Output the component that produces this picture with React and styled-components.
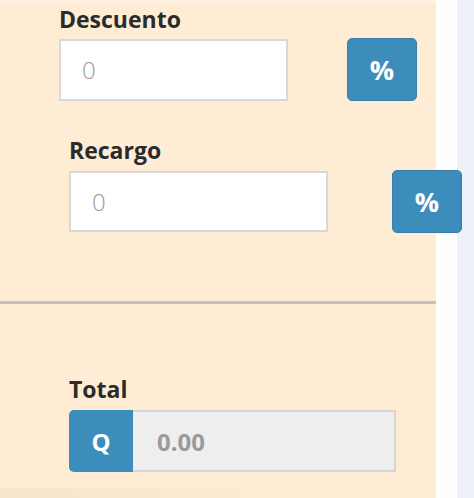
import React from 'react'
import styled, { createGlobalStyle } from 'styled-components'

const Global = createGlobalStyle`
    html, body {
        margin: 0;
        padding: 0;
        background: #eef1f7;
        font-family: 'Open Sans', 'Liberation Sans', sans-serif;
    }
`

const Page = styled.div`
    display: flex;
    height: 498px;
    overflow: hidden;
`
const Panel = styled.div`
    width: 436px;
    flex-shrink: 0;
    background: #feecd5;
    border-top: 3px solid #fff2e3;
    box-sizing: border-box;
    display: flex;
    flex-direction: column;
    position: relative;
    z-index: 1;
`
const Gutter = styled.div`
    width: 21px;
    flex-shrink: 0;
    background: #fefefe;
`
const Section = styled.div`
    padding-left: ${props => props.indent}px;
    margin-top: ${props => props.top}px;
`
const Label = styled.div`
    font-size: 23px;
    line-height: 30px;
    font-weight: 700;
    color: #2b2b2b;
    margin-bottom: ${props => props.gap}px;
`
const Row = styled.div`
    display: flex;
    align-items: center;
    gap: ${props => props.gap}px;
`
const Input = styled.div`
    width: ${props => props.width}px;
    height: ${props => props.height}px;
    flex-shrink: 0;
    box-sizing: border-box;
    background: #fff;
    border: 2px solid #d8d8d8;
    padding-left: 21px;
    display: flex;
    align-items: center;
    font-size: 24px;
    font-weight: 300;
    color: #9a9a9a;
`
const PctButton = styled.button`
    width: 70px;
    height: 63px;
    flex-shrink: 0;
    background: #3c8dbc;
    border: 1px solid #367fa9;
    border-radius: 5px;
    color: #fff;
    font-family: inherit;
    font-size: 27px;
    font-weight: 700;
    padding: 0;
`
const Divider = styled.div`
    height: 3px;
    background: #c6c0b8;
    margin-top: ${props => props.top}px;
`
const Group = styled.div`
    display: flex;
    height: 62px;
`
const Addon = styled.div`
    width: 64px;
    background: #3c8dbc;
    border-radius: 5px 0 0 5px;
    color: #fff;
    font-size: 24px;
    font-weight: 700;
    display: flex;
    align-items: center;
    justify-content: center;
`
const ReadOnly = styled.div`
    width: 263px;
    box-sizing: border-box;
    background: #eeeeee;
    border: 2px solid #d6d6d6;
    border-left: none;
    padding-left: 24px;
    display: flex;
    align-items: center;
    font-size: 24px;
    font-weight: 700;
    color: #9a9a9a;
`
const Shade = styled.div`
    position: absolute;
    left: 0;
    bottom: 0;
    width: 300px;
    height: 10px;
    background: linear-gradient(90deg, rgba(190,160,120,0.1), rgba(190,160,120,0));
`

const App = () => {
    return (
        <Page>
            <Global />
            <Panel>
                <Section indent={59} top={1}>
                    <Label gap={4}>Descuento</Label>
                    <Row gap={59}>
                        <Input width={229} height={62}>0</Input>
                        <PctButton>%</PctButton>
                    </Row>
                </Section>
                <Section indent={69} top={34}>
                    <Label gap={5}>Recargo</Label>
                    <Row gap={64}>
                        <Input width={259} height={61}>0</Input>
                        <PctButton>%</PctButton>
                    </Row>
                </Section>
                <Divider top={68} />
                <Section indent={69} top={70}>
                    <Label gap={6}>Total</Label>
                    <Group>
                        <Addon>Q</Addon>
                        <ReadOnly>0.00</ReadOnly>
                    </Group>
                </Section>
                <Shade />
            </Panel>
            <Gutter />
        </Page>
    )
}

export default App
